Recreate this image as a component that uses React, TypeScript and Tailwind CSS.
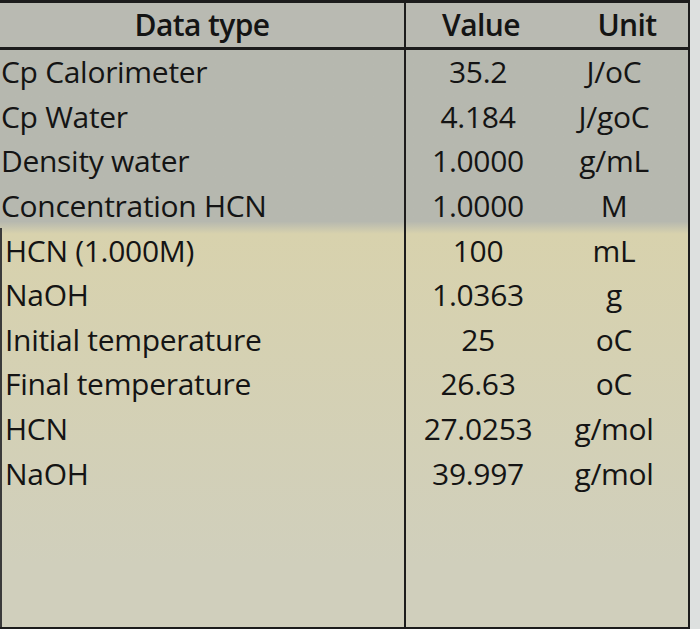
const rows = [
  { label: "Cp Calorimeter", value: "35.2", unit: "J/oC" },
  { label: "Cp Water", value: "4.184", unit: "J/goC" },
  { label: "Density water", value: "1.0000", unit: "g/mL" },
  { label: "Concentration HCN", value: "1.0000", unit: "M" },
  { label: "HCN (1.000M)", value: "100", unit: "mL" },
  { label: "NaOH", value: "1.0363", unit: "g" },
  { label: "Initial temperature", value: "25", unit: "oC" },
  { label: "Final temperature", value: "26.63", unit: "oC" },
  { label: "HCN", value: "27.0253", unit: "g/mol" },
  { label: "NaOH", value: "39.997", unit: "g/mol" },
];

export default function App() {
  return (
    <div
      className="w-[700px] h-[629px] overflow-hidden bg-[#dde0df] text-[#141414]"
      style={{ fontFamily: '"Open Sans", "Noto Sans", sans-serif' }}
    >
      <div className="w-[690px] h-[629px] flex flex-col border-t-[3px] border-r-2 border-b-2 border-[#1c1c1c] bg-linear-to-b from-[#b6b8af] from-35% via-[#d8d2ad] via-37% to-[#d0cfbc] to-90%">
        <div className="grid grid-cols-[406px_150px_1fr] h-[47px] border-b-[3px] border-[#1c1c1c] text-[30px] font-semibold tracking-[-0.6px] leading-none">
          <div className="flex items-center justify-center border-r-2 border-[#1c1c1c] bg-[#b9bab2]">Data type</div>
          <div className="flex items-center justify-center bg-[#b9bab2]">Value</div>
          <div className="flex items-center justify-center pl-[10px] bg-[#b9bab2]">Unit</div>
        </div>
        {rows.map((r, i) => (
          <div
            key={i}
            className="grid grid-cols-[406px_150px_1fr] h-[44.6px] text-[30px] font-medium tracking-[-0.3px] leading-none"
          >
            <div
              className={
                i >= 4
                  ? "flex items-center pl-[3px] border-r-2 border-[#1c1c1c] border-l-2 border-l-[#3a3a3a]"
                  : "flex items-center pl-[1px] border-r-2 border-[#1c1c1c]"
              }
            >
              {r.label}
            </div>
            <div className="flex items-center justify-center pr-[6px]">{r.value}</div>
            <div className="flex items-center justify-center pr-[16px]">{r.unit}</div>
          </div>
        ))}
        <div className="flex-1 grid grid-cols-[406px_1fr]">
          <div className="border-r-2 border-[#1c1c1c] border-l-2 border-l-[#3a3a3a]" />
          <div />
        </div>
      </div>
    </div>
  );
}
